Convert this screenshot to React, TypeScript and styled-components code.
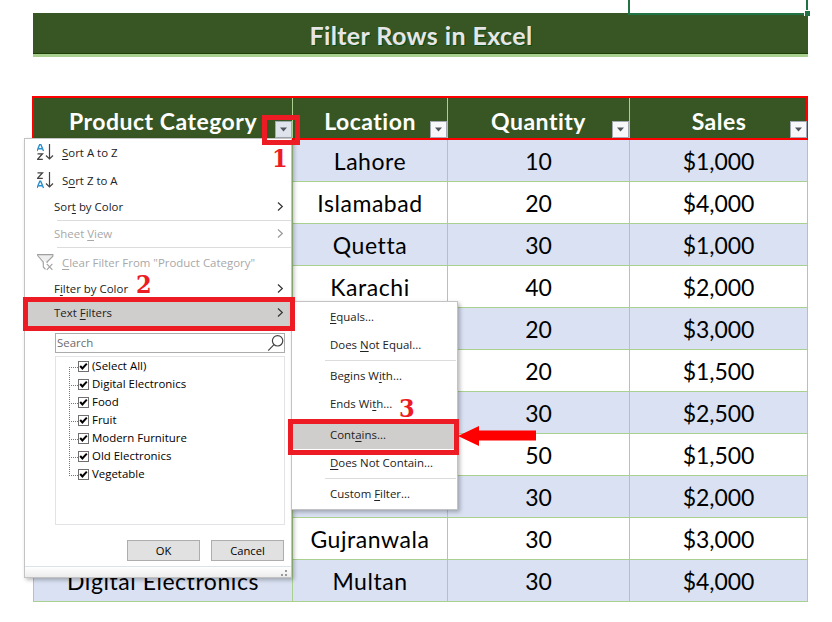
import React from "react";
import styled, { createGlobalStyle, css } from "styled-components";

const Global = createGlobalStyle`
  *, *::before, *::after { box-sizing: border-box; }
  body { margin: 0; background: #fff; overflow: hidden; }
`;

const sheetFont = `Lato, "Open Sans", sans-serif`;
const menuFont = `"Open Sans", "Noto Sans", sans-serif`;
const markRed = "#ed1c24";

const Page = styled.main`
  position: relative;
  width: 832px;
  height: 622px;
  overflow: hidden;
  background: #fff;
  font-family: ${sheetFont};
  font-variant-ligatures: none;
`;

const Sheet = styled.section`
  display: flex;
  flex-direction: column;
  padding: 13px 24px 0 32px;
`;

const Banner = styled.h1`
  display: flex;
  justify-content: center;
  align-items: center;
  height: 44px;
  margin: 0 0 39px 1px;
  padding: 2px 0 0 1px;
  background: #375623;
  border-bottom: 3px solid #a9d08e;
  box-shadow: inset 0 -1px 0 #1d3f08;
  color: #e7e6e6;
  font-size: 25px;
  font-weight: 700;
  letter-spacing: 0.4px;
  text-shadow: 1px 1px 0 #0b4a1a;
`;

const columns = "259px 155px 182px 178px";

const HeaderRow = styled.div`
  display: grid;
  grid-template-columns: 259px 155px 182px 176px;
  height: 44px;
  border: 2px solid #f00;
`;

const HeaderCell = styled.div<{ $last?: boolean }>`
  display: flex;
  position: relative;
  justify-content: center;
  align-items: center;
  padding: 6px 0 0 ${(p) => (p.$last ? "2px" : "0")};
  background: #375623;
  border-right: ${(p) => (p.$last ? "0" : "1px solid #a9d08e")};
  color: #fff;
  font-size: 23px;
  font-weight: 700;
  letter-spacing: 0.5px;
`;

const DropButton = styled.span<{ $open?: boolean; $last?: boolean }>`
  position: absolute;
  right: ${(p) => (p.$last ? "-1px" : "0")};
  bottom: 0;
  display: flex;
  justify-content: center;
  align-items: center;
  width: 17px;
  height: 17px;
  background: ${(p) => (p.$open ? "#dfe3ec" : "#f8f8fb")};
  border: 1px solid #a3a8b3;
`;

const Body = styled.div`
  margin-left: 1px;
  border-left: 1px solid #a9d08e;
`;

const Row = styled.div<{ $band: boolean }>`
  display: grid;
  grid-template-columns: ${columns};
  height: 42px;
  background: ${(p) => (p.$band ? "#d9e1f2" : "#fff")};
`;

const Cell = styled.div<{ $numeric?: boolean }>`
  display: flex;
  justify-content: center;
  align-items: center;
  padding: 1px 0 0;
  border-right: 1px solid #a9d08e;
  border-bottom: 1px solid #a9d08e;
  color: #000;
  font-size: 23px;
  letter-spacing: ${(p) => (p.$numeric ? "-0.1px" : "0.55px")};
  white-space: nowrap;
`;

const Selection = styled.div`
  position: absolute;
  left: 628px;
  top: -20px;
  width: 180px;
  height: 35px;
  border: 2px solid #217346;
`;

const Handle = styled.i`
  position: absolute;
  left: 804px;
  top: 10px;
  width: 6px;
  height: 6px;
  background: #217346;
  border: solid #fff;
  border-width: 1px 0 0 1px;
`;

const popup = css`
  position: absolute;
  background: #fff;
  border: 1px solid #c3c3c3;
  box-shadow: 2px 2px 4px rgba(0, 0, 0, 0.28);
  color: #222;
  font-family: ${menuFont};
  font-size: 11.45px;
  white-space: nowrap;
`;

const Menu = styled.div`
  ${popup}
  left: 24px;
  top: 138px;
  width: 268px;
  height: 440px;
`;

const Submenu = styled.div`
  ${popup}
  left: 291px;
  top: 301px;
  width: 167px;
  height: 209px;
  padding-top: 1px;
`;

const Item = styled.div<{ $h: number; $indent?: number; $gap?: number; $active?: boolean; $off?: boolean }>`
  display: flex;
  align-items: center;
  height: ${(p) => p.$h}px;
  margin-top: ${(p) => p.$gap ?? 0}px;
  padding: 0 6px 2px ${(p) => p.$indent ?? 29}px;
  background: ${(p) => (p.$active ? "#d0cecc" : "transparent")};
  color: ${(p) => (p.$off ? "#a8a8a8" : "#222")};
  svg.chevron { margin-left: auto; }
`;

const IconSlot = styled.span`
  display: flex;
  width: 25px;
  flex: none;
`;

const Key = styled.u`
  text-decoration-thickness: 1px;
  text-underline-offset: 2px;
`;

const Rule = styled.hr<{ $inset: number; $right?: number }>`
  height: 1px;
  margin: 0 ${(p) => p.$right ?? 0}px 0 ${(p) => p.$inset}px;
  border: 0;
  background: #dcdcdc;
`;

const SearchBox = styled.div`
  display: flex;
  justify-content: space-between;
  align-items: center;
  width: 230px;
  height: 20px;
  margin: 7px 0 0 30px;
  padding: 0 0 2px 1px;
  border: 1px solid #ababab;
  color: #6b6b6b;
  svg { margin: 1px -1px 0 0; }
`;

const CheckList = styled.div`
  width: 230px;
  height: 169px;
  margin: 3px 0 0 30px;
  padding: 0 0 0 13px;
  border: 1px solid #e2e3e6;
  color: #000;
`;

const CheckRow = styled.div<{ $edge?: "first" | "last" }>`
  display: flex;
  align-items: center;
  height: 18px;
  gap: 3px;
  background:
    repeating-linear-gradient(90deg, #777 0 1px, transparent 1px 2px) 0 10px / 9px 1px no-repeat,
    repeating-linear-gradient(180deg, #777 0 1px, transparent 1px 2px) 0 ${(p) => (p.$edge === "first" ? "10px" : "0")} / 1px
      ${(p) => (p.$edge ? (p.$edge === "first" ? "8px" : "10px") : "18px")} no-repeat;
`;

const CheckLabel = styled.span`
  padding-bottom: 2px;
`;

const Box = styled.span`
  display: flex;
  justify-content: center;
  align-items: center;
  width: 11px;
  height: 11px;
  margin-left: 9px;
  border: 1px solid #707070;
  background: #fff;
`;

const Actions = styled.div`
  display: flex;
  justify-content: flex-end;
  gap: 11px;
  margin: 15px 7px 5px 0;
`;

const Action = styled.button`
  width: 73px;
  height: 21px;
  padding: 0;
  border: 1px solid #adadad;
  background: #e1e1e1;
  color: #000;
  font: 500 11.2px ${menuFont};
`;

const Footer = styled.div`
  display: flex;
  justify-content: flex-end;
  height: 11px;
  padding: 2px 3px 0 0;
  border-top: 1px solid #dbe2e8;
  background: linear-gradient(#fff, #ececec);
`;

const Frame = styled.div<{ $x: number; $y: number; $w: number; $h: number }>`
  position: absolute;
  left: ${(p) => p.$x}px;
  top: ${(p) => p.$y}px;
  width: ${(p) => p.$w}px;
  height: ${(p) => p.$h}px;
  border: 5px solid ${markRed};
`;

const Step = styled.b<{ $x: number; $y: number }>`
  position: absolute;
  left: ${(p) => p.$x}px;
  top: ${(p) => p.$y}px;
  color: ${markRed};
  font: 700 25px/24px "DejaVu Serif Condensed", "DejaVu Serif", serif;
  font-stretch: condensed;
`;

const Arrow = styled.svg`
  position: absolute;
  left: 458px;
  top: 425px;
`;

const Chevron = ({ off }: { off?: boolean }) => (
  <svg className="chevron" width="9" height="11" viewBox="0 0 9 11" fill="none" stroke={off ? "#999" : "#333"} strokeWidth="1.2">
    <path d="M2 1.5 6.3 5.5 2 9.5" />
  </svg>
);

const SortIcon = ({ down }: { down?: boolean }) => {
  const a = <path d="M0 7 2.8 .2h.9L6.5 7M1.1 4.7h4.3" stroke="#2b8fce" strokeWidth="1.4" transform={down ? "translate(0 9)" : undefined} />;
  const z = <path d="M.5 .8h5L.5 6.4h5.3" stroke="#444" strokeWidth="1.3" transform={down ? undefined : "translate(0 9)"} />;
  return (
    <svg width="18" height="17" viewBox="0 0 18 17" fill="none">
      {a}
      {z}
      <path d="M12.5 0v15M9 11.5l3.5 3.5 3.5-3.5" stroke="#444" strokeWidth="1.2" />
    </svg>
  );
};

const ClearIcon = () => (
  <svg width="18" height="17" viewBox="0 0 18 17" fill="none" stroke="#a0a0a0" strokeWidth="1.1">
    <path d="M.6 1.5V.6h15.3v1.6L10 8v1M.6 1.5 6.3 8v5l2.2 2.3" fill="#eee" />
    <path d="m9.8 9.8 5.6 6M15.4 9.8l-5.6 6" />
  </svg>
);

const Magnifier = () => (
  <svg width="18" height="18" viewBox="0 0 18 18" fill="none" stroke="#444" strokeWidth="1.2">
    <circle cx="10.6" cy="6.8" r="5.2" />
    <path d="m7 10.6-5.8 6" />
  </svg>
);

const Triangle = () => (
  <svg width="7" height="5" viewBox="0 0 7 5">
    <path d="M0 .5h7L3.5 4.5z" fill="#50545c" />
  </svg>
);

const Tick = () => (
  <svg width="9" height="9" viewBox="0 0 9 9" fill="none">
    <path d="m1.2 4 2.2 2.4L7.8 1.6" stroke="#000" strokeWidth="2" />
  </svg>
);

const Grip = () => (
  <svg width="8" height="8" viewBox="0 0 8 8" fill="#9a9a9a">
    <path d="M5 1h2v2H5zM5 5h2v2H5zM1 5h2v2H1z" />
  </svg>
);

const rows = [
  ["", "Lahore", "10", "$1,000"],
  ["", "Islamabad", "20", "$4,000"],
  ["", "Quetta", "30", "$1,000"],
  ["", "Karachi", "40", "$2,000"],
  ["", "", "20", "$3,000"],
  ["", "", "20", "$1,500"],
  ["", "", "30", "$2,500"],
  ["", "", "50", "$1,500"],
  ["", "Hyderabad", "30", "$2,000"],
  ["", "Gujranwala", "30", "$3,000"],
  ["Digital Electronics", "Multan", "30", "$4,000"],
];

const headers = ["Product Category", "Location", "Quantity", "Sales"];

const categories = [
  "(Select All)",
  "Digital Electronics",
  "Food",
  "Fruit",
  "Modern Furniture",
  "Old Electronics",
  "Vegetable",
];

export default function App() {
  return (
    <Page>
      <Global />
      <Sheet>
        <Banner>Filter Rows in Excel</Banner>
        <HeaderRow>
          {headers.map((name, i) => (
            <HeaderCell key={name} $last={i === 3}>
              {name}
              <DropButton $open={i === 0} $last={i === 3}>
                <Triangle />
              </DropButton>
            </HeaderCell>
          ))}
        </HeaderRow>
        <Body>
          {rows.map((row, r) => (
            <Row key={r} $band={r % 2 === 0}>
              {row.map((value, c) => (
                <Cell key={c} $numeric={c > 1}>
                  {value}
                </Cell>
              ))}
            </Row>
          ))}
        </Body>
      </Sheet>
      <Selection />
      <Handle />

      <Menu>
        <Item $h={28} $indent={12}>
          <IconSlot><SortIcon /></IconSlot>
          <span><Key>S</Key>ort A to Z</span>
        </Item>
        <Item $h={28} $indent={12}>
          <IconSlot><SortIcon down /></IconSlot>
          <span>S<Key>o</Key>rt Z to A</span>
        </Item>
        <Item $h={25}>
          <span>Sor<Key>t</Key> by Color</span>
          <Chevron />
        </Item>
        <Rule $inset={32} />
        <Item $h={26} $off>
          <span>Sheet <Key>V</Key>iew</span>
          <Chevron off />
        </Item>
        <Rule $inset={32} />
        <Item $h={30} $indent={12} $off>
          <IconSlot><ClearIcon /></IconSlot>
          <span><Key>C</Key>lear Filter From "Product Category"</span>
        </Item>
        <Item $h={23}>
          <span>F<Key>i</Key>lter by Color</span>
          <Chevron />
        </Item>
        <Item $h={25} $active>
          <span>Text <Key>F</Key>ilters</span>
          <Chevron />
        </Item>
        <SearchBox>
          <span>Search</span>
          <Magnifier />
        </SearchBox>
        <CheckList>
          {categories.map((name, i) => (
            <CheckRow key={name} $edge={i === 0 ? "first" : i === categories.length - 1 ? "last" : undefined}>
              <Box><Tick /></Box>
              <CheckLabel>{name}</CheckLabel>
            </CheckRow>
          ))}
        </CheckList>
        <Actions>
          <Action>OK</Action>
          <Action>Cancel</Action>
        </Actions>
        <Footer><Grip /></Footer>
      </Menu>

      <Submenu>
        <Item $h={28} $indent={38}><span><Key>E</Key>quals...</span></Item>
        <Item $h={29} $indent={38}><span>Does <Key>N</Key>ot Equal...</span></Item>
        <Rule $inset={33} $right={1} />
        <Item $h={30} $indent={38}><span>Begins W<Key>i</Key>th...</span></Item>
        <Item $h={27} $indent={38}><span>Ends Wi<Key>t</Key>h...</span></Item>
        <Item $h={28} $indent={38} $gap={3} $active><span>Cont<Key>a</Key>ins...</span></Item>
        <Item $h={29} $indent={38}><span><Key>D</Key>oes Not Contain...</span></Item>
        <Rule $inset={33} $right={1} />
        <Item $h={30} $indent={38}><span>Custom <Key>F</Key>ilter...</span></Item>
      </Submenu>

      <Frame $x={262} $y={115} $w={38} $h={30} />
      <Frame $x={23} $y={297} $w={272} $h={34} />
      <Frame $x={288} $y={419} $w={171} $h={36} />
      <Step $x={272} $y={147}>1</Step>
      <Step $x={136} $y={273}>2</Step>
      <Step $x={399} $y={397}>3</Step>
      <Arrow width="80" height="22" viewBox="0 0 80 22">
        <path d="M0 11 21 1v4.5h57v10H21V21z" fill="#f00" />
      </Arrow>
    </Page>
  );
}
